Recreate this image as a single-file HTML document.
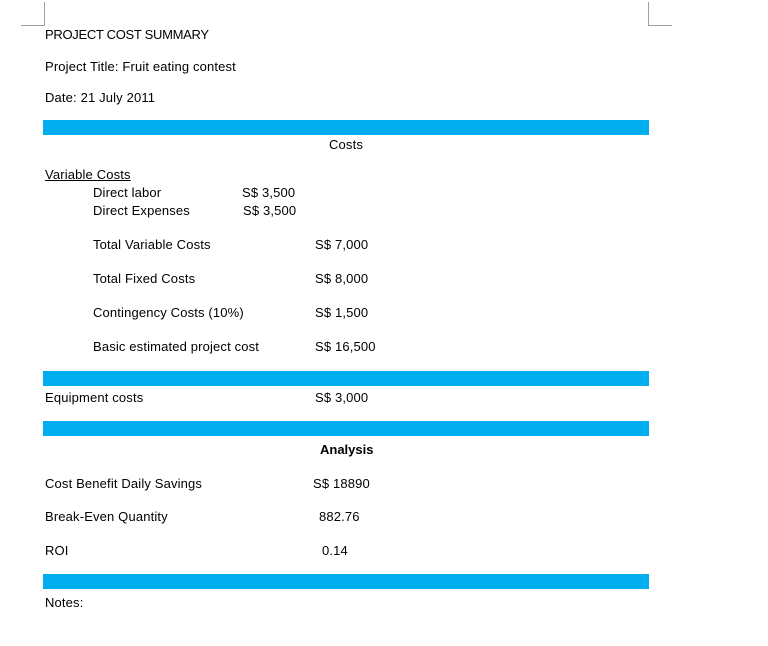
<!DOCTYPE html>
<html><head><style>
body{margin:0;width:768px;height:646px;background:#fff;position:relative;font-family:"Liberation Sans",sans-serif;font-size:13px;color:#000;overflow:hidden}
.t{position:absolute;line-height:16px;white-space:nowrap;letter-spacing:0.15px}
.bar{position:absolute;left:43px;width:606px;height:15px;background:#00adef}
.l{position:absolute;background:#a0a0a0}
</style></head><body>
<div class="l" style="left:44px;top:2px;width:1px;height:24px"></div>
<div class="l" style="left:21px;top:25px;width:24px;height:1px"></div>
<div class="l" style="left:648px;top:2px;width:1px;height:24px"></div>
<div class="l" style="left:648px;top:25px;width:24px;height:1px"></div>
<div class="t" style="left:45px;top:27px;letter-spacing:-0.3px">PROJECT COST SUMMARY</div>
<div class="t" style="left:45px;top:59px">Project Title: Fruit eating contest</div>
<div class="t" style="left:45px;top:90px">Date: 21 July 2011</div>
<div class="bar" style="top:120px"></div>
<div class="t" style="left:329px;top:137px">Costs</div>
<div class="t" style="left:45px;top:167px;text-decoration:underline">Variable Costs</div>
<div class="t" style="left:93px;top:185px">Direct labor</div>
<div class="t" style="left:242px;top:185px">S$ 3,500</div>
<div class="t" style="left:93px;top:203px">Direct Expenses</div>
<div class="t" style="left:243px;top:203px">S$ 3,500</div>
<div class="t" style="left:93px;top:237px">Total Variable Costs</div>
<div class="t" style="left:315px;top:237px">S$ 7,000</div>
<div class="t" style="left:93px;top:271px">Total Fixed Costs</div>
<div class="t" style="left:315px;top:271px">S$ 8,000</div>
<div class="t" style="left:93px;top:305px">Contingency Costs (10%)</div>
<div class="t" style="left:315px;top:305px">S$ 1,500</div>
<div class="t" style="left:93px;top:339px">Basic estimated project cost</div>
<div class="t" style="left:315px;top:339px">S$ 16,500</div>
<div class="bar" style="top:371px"></div>
<div class="t" style="left:45px;top:390px">Equipment costs</div>
<div class="t" style="left:315px;top:390px">S$ 3,000</div>
<div class="bar" style="top:421px"></div>
<div class="t" style="left:320px;top:442px;font-weight:bold;letter-spacing:0">Analysis</div>
<div class="t" style="left:45px;top:476px">Cost Benefit Daily Savings</div>
<div class="t" style="left:313px;top:476px">S$ 18890</div>
<div class="t" style="left:45px;top:509px">Break-Even Quantity</div>
<div class="t" style="left:319px;top:509px">882.76</div>
<div class="t" style="left:45px;top:543px">ROI</div>
<div class="t" style="left:322px;top:543px">0.14</div>
<div class="bar" style="top:574px"></div>
<div class="t" style="left:45px;top:595px">Notes:</div>
</body></html>
